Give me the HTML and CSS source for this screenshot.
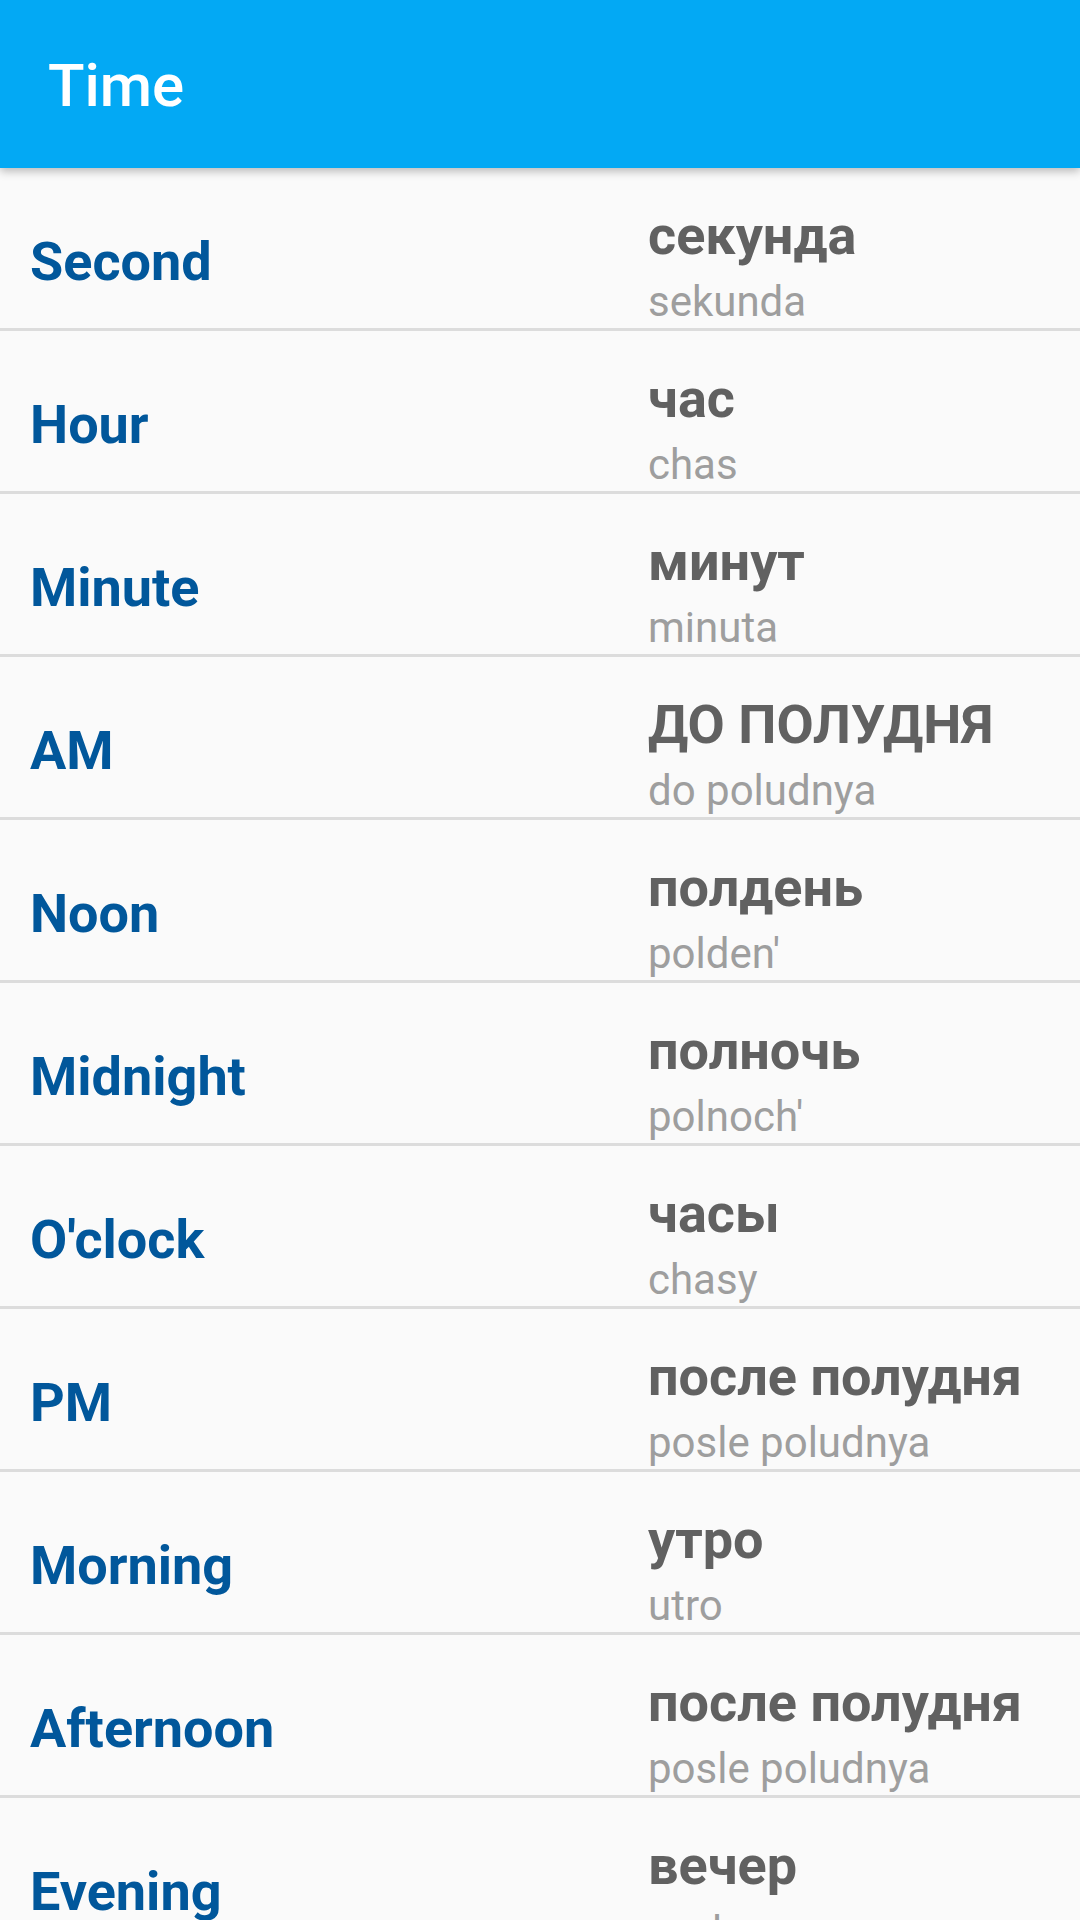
FILE: index.html
```html
<!DOCTYPE html>
<html lang="ru">
<head>
    <meta charset="UTF-8">
    <meta name="viewport" content="width=device-width, initial-scale=1.0">
    <title>Time</title>
    <link rel="stylesheet" href="styles.css">
</head>
<body>
    <header class="toolbar">
        <h1 class="toolbar-title">Time</h1>
    </header>
    <main class="word-list">
        <div class="word">
            <p class="word-default">Second</p>
            <div class="word-foreign">
                <p class="word-russian">секунда</p>
                <p class="word-translit">sekunda</p>
            </div>
        </div>
        <div class="word">
            <p class="word-default">Hour</p>
            <div class="word-foreign">
                <p class="word-russian">час</p>
                <p class="word-translit">chas</p>
            </div>
        </div>
        <div class="word">
            <p class="word-default">Minute</p>
            <div class="word-foreign">
                <p class="word-russian">минут</p>
                <p class="word-translit">minuta</p>
            </div>
        </div>
        <div class="word">
            <p class="word-default">AM</p>
            <div class="word-foreign">
                <p class="word-russian">ДО ПОЛУДНЯ</p>
                <p class="word-translit">do poludnya</p>
            </div>
        </div>
        <div class="word">
            <p class="word-default">Noon</p>
            <div class="word-foreign">
                <p class="word-russian">полдень</p>
                <p class="word-translit">polden'</p>
            </div>
        </div>
        <div class="word">
            <p class="word-default">Midnight</p>
            <div class="word-foreign">
                <p class="word-russian">полночь</p>
                <p class="word-translit">polnoch'</p>
            </div>
        </div>
        <div class="word">
            <p class="word-default">O'clock</p>
            <div class="word-foreign">
                <p class="word-russian">часы</p>
                <p class="word-translit">chasy</p>
            </div>
        </div>
        <div class="word">
            <p class="word-default">PM</p>
            <div class="word-foreign">
                <p class="word-russian">после полудня</p>
                <p class="word-translit">posle poludnya</p>
            </div>
        </div>
        <div class="word">
            <p class="word-default">Morning</p>
            <div class="word-foreign">
                <p class="word-russian">утро</p>
                <p class="word-translit">utro</p>
            </div>
        </div>
        <div class="word">
            <p class="word-default">Afternoon</p>
            <div class="word-foreign">
                <p class="word-russian">после полудня</p>
                <p class="word-translit">posle poludnya</p>
            </div>
        </div>
        <div class="word">
            <p class="word-default">Evening</p>
            <div class="word-foreign">
                <p class="word-russian">вечер</p>
                <p class="word-translit">vecher</p>
            </div>
        </div>
    </main>
</body>
</html>
```

FILE: styles.css
```css
*, ::before, ::after {
    margin: 0;
    padding: 0;
    box-sizing: border-box;
}

body {
    background-color: #fafafa;
    font-family: Roboto, "Noto Sans", sans-serif;
    height: 1920px;
    overflow: hidden;
}

.toolbar {
    position: relative;
    z-index: 1;
    height: 168px;
    padding: 0 48px;
    background-color: #03a9f4;
    box-shadow: 0 3px 9px rgba(0, 0, 0, 0.28);
}

.toolbar-title {
    padding-top: 51px;
    color: #fff;
    font-size: 60px;
    font-weight: 500;
    line-height: 70px;
}

.word {
    display: flex;
    height: 163px;
    border-bottom: 3px solid #dcdcdc;
}

.word-default {
    width: 60%;
    padding: 62px 0 0 30px;
    color: #01579b;
    font-size: 54px;
    font-weight: 700;
    line-height: 64px;
}

.word-foreign {
    width: 40%;
    padding-top: 36px;
}

.word-russian {
    color: #616161;
    font-size: 54px;
    font-weight: 700;
    line-height: 64px;
    white-space: nowrap;
}

.word-translit {
    color: #9e9e9e;
    font-size: 42px;
    line-height: 67px;
    white-space: nowrap;
}
```
